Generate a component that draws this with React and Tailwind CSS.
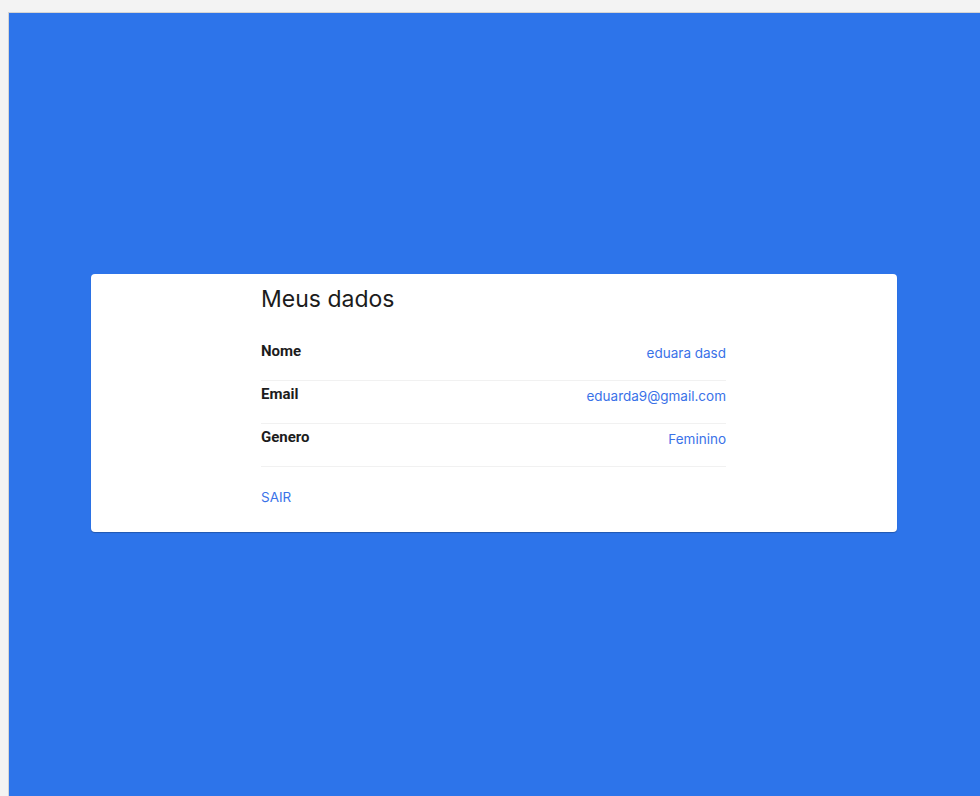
const rows = [
  { label: 'Nome', value: 'eduara dasd' },
  { label: 'Email', value: 'eduarda9@gmail.com' },
  { label: 'Genero', value: 'Feminino' },
];

export default function App() {
  return (
    <div className="min-h-[796px] bg-[#f3f3f3] pl-2 pt-3">
      <div className="flex min-h-[784px] items-center border-l border-t border-[#d4d4d4] bg-[#2d74ea] pl-[82px] pr-[81px] pb-[4px]">
        <div className="w-[806px] rounded-[4px] bg-white pb-[24px] pt-[11px] shadow-[0_1px_1px_rgba(0,0,0,0.25)]">
          <div className="ml-[170px] w-[465px] font-['Inter',sans-serif]">
            <h1 className="text-[23px] leading-[28px] text-[#1c1c1c]">Meus dados</h1>
            <div className="mt-[25px]">
              {rows.map((row) => (
                <div
                  key={row.label}
                  className="flex h-[43px] justify-between border-b border-[#f1f1f1] pt-[2px]"
                >
                  <span className="font-['Roboto',sans-serif] text-[15px] font-bold text-[#1c1c1c]">
                    {row.label}
                  </span>
                  <span className="pt-[3px] text-[13.5px] text-[#3a72e8]">{row.value}</span>
                </div>
              ))}
            </div>
            <button className="mt-[20px] text-[13.5px] text-[#3a72e8]">SAIR</button>
          </div>
        </div>
      </div>
    </div>
  );
}
